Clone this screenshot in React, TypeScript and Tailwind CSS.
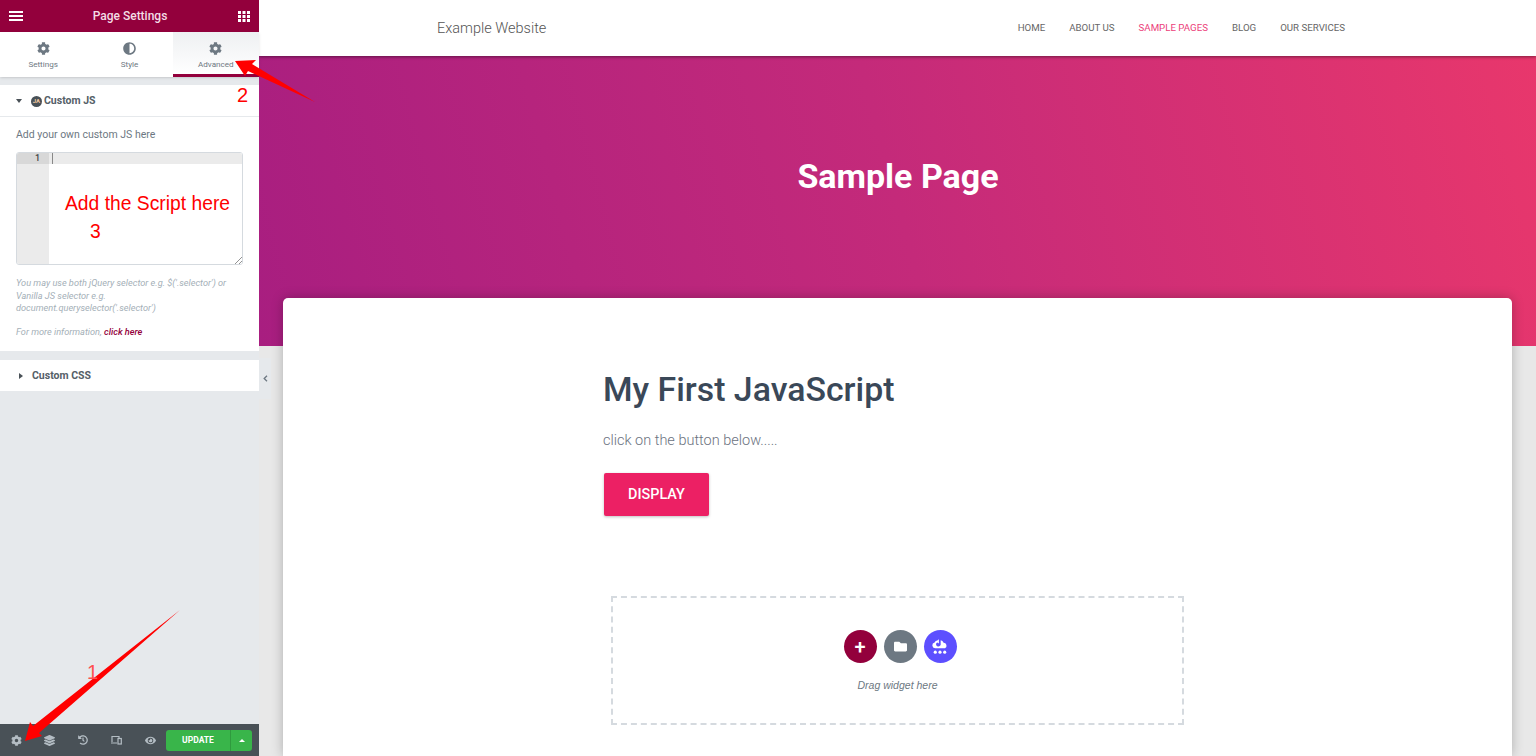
import React from "react";
import { FaAdjust, FaCog, FaEye, FaFolder, FaHistory, FaLayerGroup } from "react-icons/fa";

const roboto = { fontFamily: "Roboto, sans-serif" };

function Tab({ icon, label, active }: { icon: React.ReactNode; label: string; active?: boolean }) {
  return (
    <div
      className={
        active
          ? "flex flex-1 flex-col items-center border-b-[3px] border-[#93003c] bg-gradient-to-b from-[#eef0f2] to-white pt-[10px]"
          : "flex flex-1 flex-col items-center border-b-[3px] border-transparent pt-[10px]"
      }
    >
      <span className="text-[13px] leading-[13px] text-[#6d7882]">{icon}</span>
      <span className="mt-[4px] text-[8.1px] leading-[11px] text-[#6d7882]">{label}</span>
    </div>
  );
}

function Sidebar() {
  return (
    <aside className="z-20 flex h-[756px] w-[259px] shrink-0 flex-col bg-[#e6e9ec]">
      {/* header */}
      <div className="flex h-[32px] items-center justify-between bg-[#93003c] px-[9px] text-white">
        <svg width="14" height="10" viewBox="0 0 14 10" fill="#fff">
          <rect width="14" height="2" />
          <rect y="4" width="14" height="2" />
          <rect y="8" width="14" height="2" />
        </svg>
        <span className="pr-[1px] text-[12px] font-medium text-[#f3dde6]">Page Settings</span>
        <svg width="12" height="11" viewBox="0 0 12 11" fill="#fff">
          <rect width="3" height="3" />
          <rect x="4.5" width="3" height="3" />
          <rect x="9" width="3" height="3" />
          <rect y="4" width="3" height="3" />
          <rect x="4.5" y="4" width="3" height="3" />
          <rect x="9" y="4" width="3" height="3" />
          <rect y="8" width="3" height="3" />
          <rect x="4.5" y="8" width="3" height="3" />
          <rect x="9" y="8" width="3" height="3" />
        </svg>
      </div>

      {/* tabs */}
      <div className="flex h-[45px] bg-white shadow-sm">
        <Tab icon={<FaCog />} label="Settings" />
        <Tab icon={<FaAdjust />} label="Style" />
        <Tab icon={<FaCog />} label="Advanced" active />
      </div>

      {/* custom js */}
      <section className="mt-[8px] h-[266px] bg-white">
        <div className="flex h-[32px] items-center border-b border-[#e6e9ec] pl-[16px] pt-[1px]">
          <span className="mr-[9px] h-0 w-0 border-x-[3.5px] border-t-[4px] border-x-transparent border-t-[#495157]" />
          <span className="mr-[2px] flex h-[11px] w-[11px] items-center justify-center rounded-full bg-[#495157] text-[6px] font-bold leading-none text-[#f2c9a0]">
            JA
          </span>
          <span className="text-[10.5px] font-bold text-[#556068]">Custom JS</span>
        </div>
        <div className="px-[16px]">
          <p className="mt-[11px] text-[10.5px] leading-[14px] text-[#6d7882]">Add your own custom JS here</p>
          <div className="relative mt-[10px] flex h-[113px] w-[227px] overflow-hidden rounded-[3px] border border-[#d5dadf]">
            <div className="w-[32px] bg-[#ebebeb]">
              <div className="h-[11px] bg-[#d8d8d8] pr-[9px] text-right text-[9px] font-medium leading-[11px] text-[#444]">1</div>
            </div>
            <div className="flex-1 bg-white">
              <div className="h-[11px] bg-[#ebebeb] pl-[3px]">
                <div className="h-[11px] w-px bg-[#888]" />
              </div>
            </div>
            {/* resize grip */}
            <svg className="absolute bottom-0 right-0" width="8" height="8" viewBox="0 0 8 8" stroke="#777" strokeWidth="0.8">
              <path d="M1 8 8 1M5 8l3-3" />
            </svg>
          </div>
          <p className="mt-[12px] text-[9.2px] italic leading-[12.5px] text-[#a4afb7]">
            You may use both jQuery selector e.g. $('.selector') or
            <br />
            Vanilla JS selector e.g.
            <br />
            document.queryselector('.selector')
          </p>
          <p className="mt-[11px] text-[9.2px] italic leading-[12.5px] text-[#a4afb7]">
            For more information, <span className="font-medium text-[#93003c]">click here</span>
          </p>
        </div>
      </section>

      {/* custom css */}
      <section className="mt-[9px] flex h-[31px] items-center bg-white pl-[19px]">
        <span className="mr-[9px] h-0 w-0 border-y-[3.5px] border-l-[4px] border-y-transparent border-l-[#495157]" />
        <span className="text-[10.5px] font-bold text-[#556068]">Custom CSS</span>
      </section>

      <div className="flex-1" />

      {/* footer */}
      <div className="flex h-[32px] items-center bg-[#495157] pl-[11px] pr-[7px] text-[11px] text-[#b4bdc4]">
        <FaCog className="text-[11px]" />
        <FaLayerGroup className="ml-[22px] text-[11px]" />
        <FaHistory className="ml-[23px] text-[10px]" />
        <svg className="ml-[23px]" width="11" height="10" viewBox="0 0 11 10" fill="none" stroke="#b4bdc4" strokeWidth="1.2">
          <path d="M1 7V1.5h7V3M0 8h6" />
          <rect x="7" y="3.5" width="3.3" height="5.5" />
        </svg>
        <FaEye className="ml-[23px] text-[11px]" />
        <div className="ml-auto flex h-[21px] w-[86px] overflow-hidden rounded-[3px] bg-[#39b54a] text-white">
          <span className="flex w-[65px] items-center justify-center border-r border-[#2f9a3e] text-[8.5px] font-bold">UPDATE</span>
          <span className="flex flex-1 items-center justify-center">
            <span className="h-0 w-0 border-x-[3px] border-b-[3px] border-x-transparent border-b-white" />
          </span>
        </div>
      </div>
    </aside>
  );
}

function SiteHeader() {
  return (
    <header className="z-10 flex h-[56px] shrink-0 items-center bg-white pl-[178px] pr-[191px] pt-[1px] shadow-[0_1px_3px_rgba(0,0,0,0.45)]">
      <span className="text-[14.5px] font-light text-[#555]">Example Website</span>
      <nav className="ml-auto flex gap-[24px] text-[9.7px] text-[#666]">
        <span>HOME</span>
        <span>ABOUT US</span>
        <span className="text-[#ec407a]">SAMPLE PAGES</span>
        <span>BLOG</span>
        <span>OUR SERVICES</span>
      </nav>
    </header>
  );
}

function DropZone() {
  return (
    <div className="ml-[328px] mt-[80px] flex h-[129px] w-[573px] flex-col items-center border-2 border-dashed border-[#d5dadf] pt-[32px]">
      <div className="flex gap-[7px] pl-[5px]">
        <span className="flex h-[33px] w-[33px] items-center justify-center rounded-full bg-[#93003c] text-[20px] font-medium leading-none text-white">+</span>
        <span className="flex h-[33px] w-[33px] items-center justify-center rounded-full bg-[#6d7882] text-[13px] text-white">
          <FaFolder />
        </span>
        <span className="flex h-[33px] w-[33px] items-center justify-center rounded-full bg-[#5d4fff]">
          <svg width="18" height="18" viewBox="0 0 16 16" fill="#fff">
            <path d="M8.6 0.6v1.5a3.6 3.6 0 0 1 2.6 2.1 2.7 2.7 0 0 1 1.3 5H3.6a2.7 2.7 0 0 1-.4-5.3A3 3 0 0 1 5.6 2.3L7 1.2v3.6L5.6 3.9a1.9 1.9 0 0 0 .4 3.6 2.1 2.1 0 0 0 2.6-2.5z" />
            <circle cx="3.8" cy="12.6" r="1.4" />
            <circle cx="8" cy="12.6" r="1.4" />
            <circle cx="12.2" cy="12.6" r="1.4" />
          </svg>
        </span>
      </div>
      <p className="mt-[15px] text-[10.5px] italic text-[#6d7882]" style={{ fontFamily: "'Liberation Sans', sans-serif" }}>
        Drag widget here
      </p>
    </div>
  );
}

function Annotations() {
  return (
    <div className="pointer-events-none absolute inset-0 z-30 overflow-hidden" style={{ fontFamily: "'Liberation Sans', sans-serif" }}>
      <svg className="absolute inset-0" width="1536" height="756" fill="#ff0000">
        {/* arrow to Advanced */}
        <path d="M315 102 L252 64 L256 60 L235 61 L245 76 L248 71 Z" />
        {/* arrow to the gear */}
        <path d="M180 610 L39 733 L42 736 L25 741 L30 722 L33 726 Z" />
      </svg>
      <span className="absolute left-[237px] top-[83px] text-[20px] leading-[24px] text-[#ff0000]">2</span>
      <span className="absolute left-[65px] top-[192px] text-[19.3px] leading-[24px] text-[#ff0000]">Add the Script here</span>
      <span className="absolute left-[90px] top-[220px] text-[19.3px] leading-[24px] text-[#ff0000]">3</span>
      <span className="absolute left-[87px] top-[660px] text-[20px] leading-[24px] text-[#ff5050]">1</span>
    </div>
  );
}

export default function App() {
  return (
    <div className="relative flex h-[756px] w-[1536px] overflow-hidden bg-white" style={roboto}>
      <Sidebar />
      <main className="relative flex min-w-0 flex-1 flex-col overflow-hidden bg-[#e8e8e8]">
        <SiteHeader />
        <div className="flex h-[290px] shrink-0 justify-center bg-[linear-gradient(75deg,#a81e80,#c42a7a_50%,#e8376c)] pl-[1px] pt-[101px]">
          <h1 className="text-[34px] font-bold leading-[39px] text-white">Sample Page</h1>
        </div>
        {/* content card overlaps the hero */}
        <div className="relative z-10 mx-[24px] -mt-[48px] flex-1 rounded-t-[5px] bg-white shadow-[0_0_12px_rgba(0,0,0,0.25)]">
          <div className="pl-[320px] pt-[72px]">
            <h2 className="text-[33.85px] font-medium leading-[40px] text-[#3a4858]">My First JavaScript</h2>
            <p className="mt-[21px] text-[14.5px] font-light leading-[20px] text-[#6b7280]">click on the button below.....</p>
            <button className="ml-[1px] mt-[22px] flex h-[43px] w-[105px] items-center justify-center rounded-[2px] bg-[#ec2064] text-[14.4px] font-medium text-white shadow-[0_1px_3px_rgba(0,0,0,0.25)]">
              DISPLAY
            </button>
          </div>
          <DropZone />
        </div>
        {/* panel collapse handle */}
        <div className="absolute left-0 top-[358px] z-20 flex h-[41px] w-[12px] items-center justify-center bg-[#e6e9ec]">
          <svg width="5" height="7" viewBox="0 0 5 7" fill="none" stroke="#6d7882" strokeWidth="1.3">
            <path d="M4 .8 1.2 3.5 4 6.2" />
          </svg>
        </div>
      </main>
      <Annotations />
    </div>
  );
}
